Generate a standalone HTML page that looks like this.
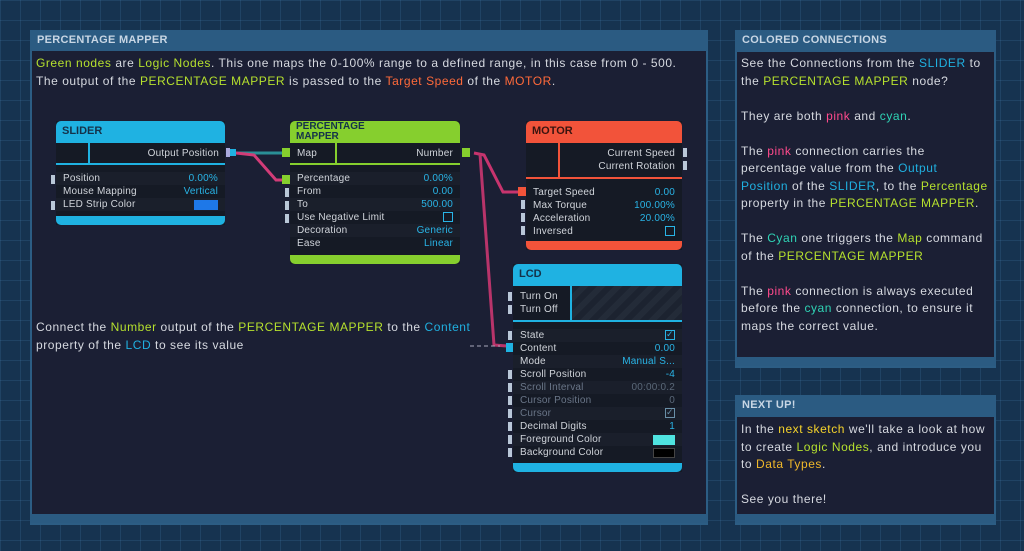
<!DOCTYPE html><html><head><meta charset="utf-8"><style>
*{margin:0;padding:0;box-sizing:border-box}
body{width:1024px;height:551px;overflow:hidden;font-family:"Liberation Sans",sans-serif;
background-color:#163350;background-image:linear-gradient(rgba(80,140,190,.18) 1px,transparent 1px),linear-gradient(90deg,rgba(80,140,190,.18) 1px,transparent 1px);background-size:20px 20px;position:relative}
.a{position:absolute}
.panel{position:absolute;background:#1b1f34;border:2px solid #2c5d84;border-top:none}
.ph{position:absolute;left:-2px;right:-2px;top:0;height:21px;background:#2b5b82;color:#c8d6e4;font-weight:bold;font-size:11px;padding:4px 7px;letter-spacing:.3px}
.pb{position:absolute;left:-2px;right:-2px;bottom:0;height:9px;background:#2b5b82}
.t{color:#d6d9e0;font-size:12px;line-height:17.5px;letter-spacing:.55px}
.g{color:#b6e12e}.c{color:#20b0e0}.o{color:#ff6a3a}.p{color:#ff4a8c}.cy{color:#2fd3b5}.y{color:#f5d32b}.yo{color:#f0b82a}
.node{position:absolute;background:#151a25}
.nh{position:absolute;left:0;right:0;top:0;font-weight:bold;font-size:11px;color:#14324a;border-radius:5px 5px 0 0;padding:4px 6px}
.row{position:absolute;left:0;right:0;height:13px;font-size:10px;color:#d0d4da;line-height:13px;padding:0 7px;letter-spacing:.2px}
.row:nth-child(odd){background:#1a1f2b}
.row span{float:right;color:#29b4e6}
.pin{position:absolute;width:4px;height:9px;background:#b9c7d8}
.fb{position:absolute;left:0;right:0;height:9px;border-radius:0 0 5px 5px}
.cb{display:inline-block;width:10px;height:10px;border:1.5px solid #29b4e6;float:right;margin-top:1px}
</style></head><body>

<div class="panel" style="left:30px;top:30px;width:678px;height:495px">
<div class="ph">PERCENTAGE MAPPER</div>
<div class="pb"></div>
</div>
<div class="a t" style="left:36px;top:55px;width:670px"><span class="g">Green nodes</span> are <span class="g">Logic Nodes</span>. This one maps the 0-100% range to a defined range, in this case from 0 - 500.<br>The output of the <span class="g">PERCENTAGE MAPPER</span> is passed to the <span class="o">Target Speed</span> of the <span class="o">MOTOR</span>.</div>
<div class="a t" style="left:36px;top:319px;width:460px">Connect the <span class="g">Number</span> output of the <span class="g">PERCENTAGE MAPPER</span> to the <span class="c">Content</span><br>property of the <span class="c">LCD</span> to see its value</div>

<svg class="a" style="left:0;top:0" width="1024" height="551">
<path d="M234 153 L282 153" stroke="#2a8f96" stroke-width="3" fill="none"/>
<path d="M236 153 L254 155 L276 180 L284 180" stroke="#d23c78" stroke-width="3" fill="none"/>
<path d="M474 153 L484 155 L503 192 L520 192" stroke="#c8346e" stroke-width="3" fill="none"/>
<path d="M480 154 L494 345 L507 346" stroke="#b8346a" stroke-width="3" fill="none"/>
<path d="M470 346 L500 346" stroke="#aab" stroke-width="1" stroke-dasharray="4 3" fill="none"/>
</svg>

<div class="node" style="left:56px;top:121px;width:169px;height:104px">
<div class="nh" style="background:#1fb2e2;height:22px">SLIDER</div>
<div class="a" style="left:32px;top:22px;width:2px;height:22px;background:#1fb2e2"></div>
<div class="a" style="left:0;right:0;top:42px;height:2px;background:#1fb2e2"></div>
<div class="row" style="top:26px;background:none;text-align:right;padding-right:6px">Output Position</div>
<div class="row" style="top:51px">Position<span>0.00%</span></div>
<div class="row" style="top:64px;background:none">Mouse Mapping<span>Vertical</span></div>
<div class="row" style="top:77px">LED Strip Color<span style="display:inline-block;width:24px;height:10px;background:#1e78e8;margin-top:2px"></span></div>
<div class="fb" style="background:#1fb2e2;top:95px"></div>
</div>
<div class="pin" style="left:51px;top:175px"></div><div class="pin" style="left:51px;top:201px"></div>
<div class="pin" style="left:226px;top:148px;background:#aad"></div><div class="a" style="left:230px;top:149px;width:6px;height:7px;background:#1fb2e2"></div>

<div class="node" style="left:290px;top:121px;width:170px;height:143px">
<div class="nh" style="background:#86cf2e;height:22px;font-size:10px;line-height:10px;padding-top:1px">PERCENTAGE<br>MAPPER</div>
<div class="a" style="left:45px;top:22px;width:2px;height:22px;background:#86cf2e"></div>
<div class="a" style="left:0;right:0;top:42px;height:2px;background:#86cf2e"></div>
<div class="row" style="top:26px;background:none">Map<span style="color:#d0d4da">Number</span></div>
<div class="row" style="top:51px">Percentage<span>0.00%</span></div>
<div class="row" style="top:64px;background:none">From<span>0.00</span></div>
<div class="row" style="top:77px">To<span>500.00</span></div>
<div class="row" style="top:90px;background:none">Use Negative Limit<span class="cb" style="color:transparent"></span></div>
<div class="row" style="top:103px">Decoration<span>Generic</span></div>
<div class="row" style="top:116px;background:none">Ease<span>Linear</span></div>
<div class="fb" style="background:#86cf2e;top:134px"></div>
</div>
<div class="a" style="left:282px;top:148px;width:8px;height:9px;background:#86cf2e"></div>
<div class="a" style="left:282px;top:175px;width:8px;height:9px;background:#86cf2e"></div>
<div class="pin" style="left:285px;top:188px"></div><div class="pin" style="left:285px;top:201px"></div><div class="pin" style="left:285px;top:214px"></div>
<div class="a" style="left:462px;top:148px;width:8px;height:9px;background:#86cf2e"></div>

<div class="node" style="left:526px;top:121px;width:156px;height:129px">
<div class="nh" style="background:#f2533a;height:22px;color:#3a140f">MOTOR</div>
<div class="a" style="left:32px;top:22px;width:2px;height:35px;background:#f2533a"></div>
<div class="a" style="left:0;right:0;top:56px;height:2px;background:#f2533a"></div>
<div class="row" style="top:26px;background:none;text-align:right">Current Speed</div>
<div class="row" style="top:39px;background:none;text-align:right">Current Rotation</div>
<div class="row" style="top:65px">Target Speed<span>0.00</span></div>
<div class="row" style="top:78px;background:none">Max Torque<span>100.00%</span></div>
<div class="row" style="top:91px">Acceleration<span>20.00%</span></div>
<div class="row" style="top:104px;background:none">Inversed<span class="cb"></span></div>
<div class="fb" style="background:#f2533a;top:120px"></div>
</div>
<div class="pin" style="left:683px;top:148px"></div><div class="pin" style="left:683px;top:161px"></div>
<div class="a" style="left:518px;top:187px;width:8px;height:9px;background:#f2533a"></div>
<div class="pin" style="left:521px;top:200px"></div><div class="pin" style="left:521px;top:213px"></div><div class="pin" style="left:521px;top:226px"></div>

<div class="node" style="left:513px;top:264px;width:169px;height:208px">
<div class="nh" style="background:#1fb2e2;height:22px">LCD</div>
<div class="a" style="left:57px;top:22px;width:2px;height:36px;background:#1fb2e2"></div>
<div class="a" style="left:59px;top:22px;right:0;height:34px;background:repeating-linear-gradient(135deg,#1c2330 0 6px,#232b38 6px 12px)"></div>
<div class="a" style="left:0;right:0;top:56px;height:2px;background:#1fb2e2"></div>
<div class="row" style="top:26px;background:none">Turn On</div>
<div class="row" style="top:39px;background:none">Turn Off</div>
<div class="row" style="top:65px">State<span class="cb" style="font-size:9px;line-height:7px;color:#29b4e6">✓</span></div>
<div class="row" style="top:78px;background:none">Content<span>0.00</span></div>
<div class="row" style="top:91px">Mode<span>Manual S...</span></div>
<div class="row" style="top:104px;background:none">Scroll Position<span>-4</span></div>
<div class="row" style="top:117px;color:#6a7688">Scroll Interval<span style="color:#5a6878">00:00:0.2</span></div>
<div class="row" style="top:130px;background:none;color:#6a7688">Cursor Position<span style="color:#5a6878">0</span></div>
<div class="row" style="top:143px;color:#6a7688">Cursor<span class="cb" style="border-color:#6a90a8;font-size:9px;line-height:7px;color:#6a90a8">✓</span></div>
<div class="row" style="top:156px;background:none">Decimal Digits<span>1</span></div>
<div class="row" style="top:169px">Foreground Color<span style="display:inline-block;width:22px;height:10px;background:#4fe3e0;margin-top:2px"></span></div>
<div class="row" style="top:182px;background:none">Background Color<span style="display:inline-block;width:22px;height:10px;background:#000;border:1px solid #444;margin-top:2px"></span></div>
<div class="fb" style="background:#1fb2e2;top:199px"></div>
</div>
<div class="pin" style="left:508px;top:292px"></div><div class="pin" style="left:508px;top:305px"></div>
<div class="pin" style="left:508px;top:331px"></div>
<div class="a" style="left:506px;top:343px;width:7px;height:9px;background:#1fb2e2"></div>
<div class="pin" style="left:508px;top:370px"></div><div class="pin" style="left:508px;top:383px"></div><div class="pin" style="left:508px;top:396px"></div><div class="pin" style="left:508px;top:409px"></div><div class="pin" style="left:508px;top:422px"></div><div class="pin" style="left:508px;top:435px"></div><div class="pin" style="left:508px;top:448px"></div>

<div class="panel" style="left:735px;top:30px;width:261px;height:338px">
<div class="ph" style="height:22px">COLORED CONNECTIONS</div>
<div class="pb"></div>
</div>
<div class="a t" style="left:741px;top:55px;width:250px">See the Connections from the <span class="c">SLIDER</span> to<br>the <span class="g">PERCENTAGE MAPPER</span> node?<br><br>They are both <span class="p">pink</span> and <span class="cy">cyan</span>.<br><br>The <span class="p">pink</span> connection carries the<br>percentage value from the <span class="c">Output</span><br><span class="c">Position</span> of the <span class="c">SLIDER</span>, to the <span class="g">Percentage</span><br>property in the <span class="g">PERCENTAGE MAPPER</span>.<br><br>The <span class="cy">Cyan</span> one triggers the <span class="g">Map</span> command<br>of the <span class="g">PERCENTAGE MAPPER</span><br><br>The <span class="p">pink</span> connection is always executed<br>before the <span class="cy">cyan</span> connection, to ensure it<br>maps the correct value.</div>

<div class="panel" style="left:735px;top:395px;width:261px;height:130px">
<div class="ph" style="height:22px">NEXT UP!</div>
<div class="pb"></div>
</div>
<div class="a t" style="left:741px;top:421px;width:250px">In the <span class="y">next sketch</span> we'll take a look at how<br>to create <span class="g">Logic Nodes</span>, and introduce you<br>to <span class="yo">Data Types</span>.<br><br>See you there!</div>
</body></html>
